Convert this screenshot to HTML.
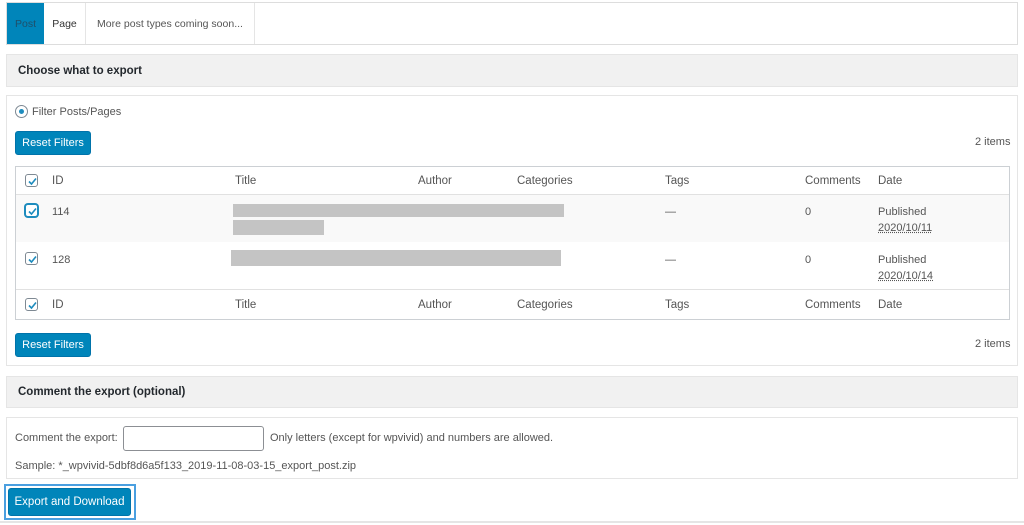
<!DOCTYPE html>
<html><head><style>
*{box-sizing:border-box;margin:0;padding:0}
body{width:1024px;height:525px;background:#fff;font-family:"Liberation Sans",sans-serif;color:#444;position:relative;overflow:hidden;font-size:11px}
.a{position:absolute}
.box{position:absolute;border:1px solid #e5e5e5;background:#fff}
.hdr{position:absolute;background:#f1f1f1;border:1px solid #e5e5e5;font-weight:bold;font-size:11.5px;color:#23282d;padding-left:11px;display:flex;align-items:center}
.btn{position:absolute;background:#0085ba;color:#fff;border-radius:3px;font-size:11px;display:flex;align-items:center;justify-content:center;border:1px solid #0073aa}
.cb{position:absolute;width:13px;height:13px;border:1px solid #7e8993;border-radius:3px;background:#fff}
.cb svg{position:absolute;left:0;top:0}
.t{position:absolute;font-size:11px;color:#555;white-space:nowrap;transform:translateY(1px)}
.bar{position:absolute;background:#c4c4c4}
.u{text-decoration:underline dotted}
</style></head><body>
<div class="box" style="left:6px;top:2px;width:1012px;height:43px;border-color:#ddd"></div>
<div class="a" style="left:7px;top:3px;width:37px;height:41px;background:#0085ba;color:#1e4f6a;font-size:10.5px;display:flex;align-items:center;justify-content:center">Post</div>
<div class="a" style="left:44px;top:3px;width:42px;height:41px;border-right:1px solid #e5e5e5;font-size:10.5px;display:flex;align-items:center;justify-content:center;color:#333">Page</div>
<div class="a" style="left:86px;top:3px;width:169px;height:41px;border-right:1px solid #e5e5e5;font-size:10.5px;display:flex;align-items:center;justify-content:center;color:#555">More post types coming soon...</div>

<div class="hdr" style="left:6px;top:54px;width:1012px;height:33px">Choose what to export</div>
<div class="box" style="left:6px;top:95px;width:1012px;height:271px"></div>
<div class="a" style="left:15px;top:105px;width:13px;height:13px;border:1px solid #7e8993;border-radius:50%"><div class="a" style="left:3px;top:3px;width:5px;height:5px;border-radius:50%;background:#1e8cbe"></div></div>
<div class="t" style="left:32px;top:105px;color:#555">Filter Posts/Pages</div>
<div class="btn" style="left:15px;top:131px;width:76px;height:24px">Reset Filters</div>
<div class="t" style="left:975px;top:135px">2 items</div>

<div class="box" style="left:15px;top:166px;width:995px;height:154px;border-color:#ccd0d4"></div>
<div class="a" style="left:16px;top:194px;width:993px;height:48px;background:#f9f9f9;border-top:1px solid #e1e1e1"></div>
<div class="a" style="left:16px;top:289px;width:993px;height:1px;background:#e1e1e1"></div>

<div class="cb" style="left:25px;top:174px"><svg width="13" height="13"><path d="M3 6.5l2.5 2.5 4.5-5.5" fill="none" stroke="#1e8cbe" stroke-width="1.6"/></svg></div>
<div class="cb" style="left:25px;top:204px;border-color:#1e8cbe;box-shadow:0 0 0 1px #1e8cbe"><svg width="13" height="13"><path d="M3 6.5l2.5 2.5 4.5-5.5" fill="none" stroke="#1e8cbe" stroke-width="1.6"/></svg></div>
<div class="cb" style="left:25px;top:252px"><svg width="13" height="13"><path d="M3 6.5l2.5 2.5 4.5-5.5" fill="none" stroke="#1e8cbe" stroke-width="1.6"/></svg></div>
<div class="cb" style="left:25px;top:298px"><svg width="13" height="13"><path d="M3 6.5l2.5 2.5 4.5-5.5" fill="none" stroke="#1e8cbe" stroke-width="1.6"/></svg></div>

<div class="t" style="left:52px;top:174px;font-size:11.5px">ID</div>
<div class="t" style="left:235px;top:174px;font-size:11.5px">Title</div>
<div class="t" style="left:418px;top:174px;font-size:11.5px">Author</div>
<div class="t" style="left:517px;top:174px;font-size:11.5px">Categories</div>
<div class="t" style="left:665px;top:174px;font-size:11.5px">Tags</div>
<div class="t" style="left:805px;top:174px;font-size:11.5px">Comments</div>
<div class="t" style="left:878px;top:174px;font-size:11.5px">Date</div>

<div class="t" style="left:52px;top:205px">114</div>
<div class="bar" style="left:233px;top:204px;width:331px;height:13px"></div>
<div class="bar" style="left:233px;top:220px;width:91px;height:15px"></div>
<div class="t" style="left:665px;top:205px">—</div>
<div class="t" style="left:805px;top:205px">0</div>
<div class="t" style="left:878px;top:205px">Published</div>
<div class="t u" style="left:878px;top:221px">2020/10/11</div>

<div class="t" style="left:52px;top:253px">128</div>
<div class="bar" style="left:231px;top:250px;width:330px;height:16px"></div>
<div class="t" style="left:665px;top:253px">—</div>
<div class="t" style="left:805px;top:253px">0</div>
<div class="t" style="left:878px;top:253px">Published</div>
<div class="t u" style="left:878px;top:269px">2020/10/14</div>

<div class="t" style="left:52px;top:298px;font-size:11.5px">ID</div>
<div class="t" style="left:235px;top:298px;font-size:11.5px">Title</div>
<div class="t" style="left:418px;top:298px;font-size:11.5px">Author</div>
<div class="t" style="left:517px;top:298px;font-size:11.5px">Categories</div>
<div class="t" style="left:665px;top:298px;font-size:11.5px">Tags</div>
<div class="t" style="left:805px;top:298px;font-size:11.5px">Comments</div>
<div class="t" style="left:878px;top:298px;font-size:11.5px">Date</div>

<div class="btn" style="left:15px;top:333px;width:76px;height:24px">Reset Filters</div>
<div class="t" style="left:975px;top:337px">2 items</div>

<div class="hdr" style="left:6px;top:376px;width:1012px;height:32px">Comment the export (optional)</div>
<div class="box" style="left:6px;top:417px;width:1012px;height:62px"></div>
<div class="t" style="left:15px;top:431px">Comment the export:</div>
<div class="a" style="left:123px;top:426px;width:141px;height:25px;border:1px solid #8c8f94;border-radius:3px;background:#fff"></div>
<div class="t" style="left:270px;top:431px">Only letters (except for wpvivid) and numbers are allowed.</div>
<div class="t" style="left:15px;top:459px">Sample: *_wpvivid-5dbf8d6a5f133_2019-11-08-03-15_export_post.zip</div>

<div class="a" style="left:4px;top:484px;width:132px;height:36px;border:2px solid #4a9fe0"></div>
<div class="btn" style="left:8px;top:488px;width:123px;height:28px;font-size:11.5px">Export and Download</div>
<div class="a" style="left:0;top:521px;width:1024px;height:2px;background:#e5e5e5"></div>
</body></html>
